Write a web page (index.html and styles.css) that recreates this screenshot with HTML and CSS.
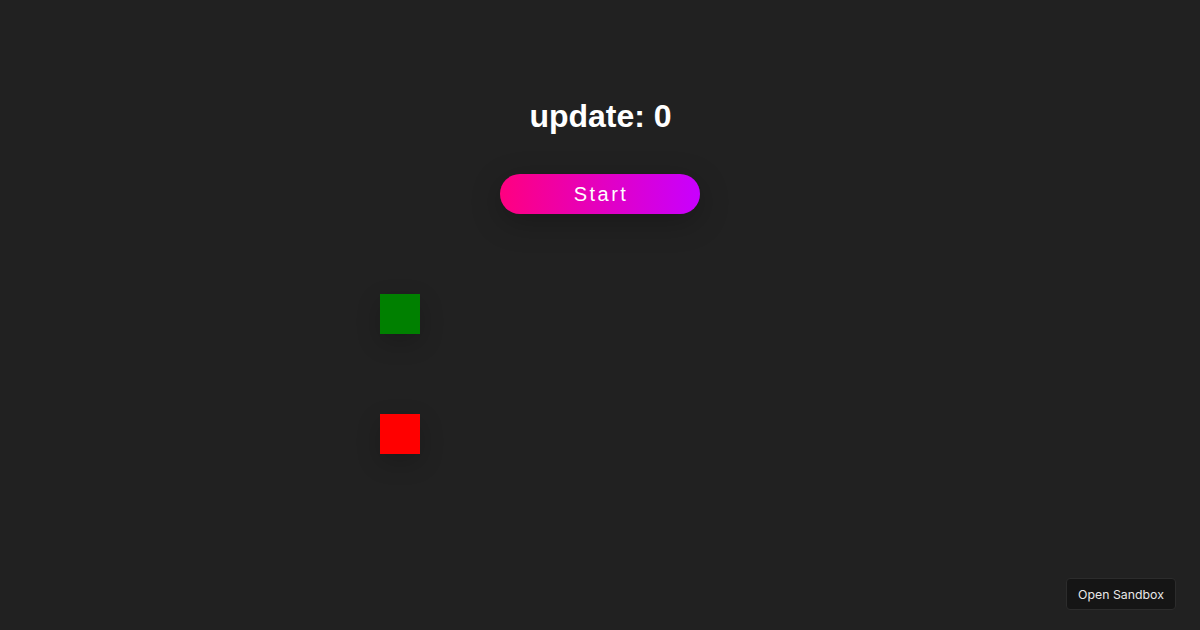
FILE: index.html
```html
<!DOCTYPE html>
<html>
<head>
<meta charset="utf-8">
<link rel="stylesheet" href="styles.css">
</head>
<body>
<div class="app">
  <h1 class="title">update: 0</h1>
  <button class="start">Start</button>
  <div class="track">
    <div class="box box-green"></div>
    <div class="box box-red"></div>
  </div>
</div>
<a class="sandbox">Open Sandbox</a>
</body>
</html>
```
FILE: styles.css
```css
html, body {
  margin: 0;
  padding: 0;
  background: #212121;
  height: 100%;
  font-family: "Liberation Sans", Arial, sans-serif;
}
.app {
  display: flex;
  flex-direction: column;
  align-items: center;
  padding-top: 98px;
}
.title {
  margin: 0;
  padding-left: 1px;
  font-size: 32px;
  line-height: 36px;
  font-weight: bold;
  color: #ffffff;
}
.start {
  margin-top: 40px;
  width: 200px;
  height: 40px;
  border: none;
  border-radius: 20px;
  background: linear-gradient(90deg, #ff0080 0%, #c800ff 100%);
  color: #ffffff;
  font-family: "Liberation Sans", Arial, sans-serif;
  font-size: 20px;
  letter-spacing: 2.5px;
  padding: 0 0 0 2px;
  box-shadow: 0 8px 30px rgba(0, 0, 0, 0.25);
}
.track {
  width: 440px;
  margin-top: 80px;
  display: flex;
  flex-direction: column;
  gap: 80px;
}
.box {
  width: 40px;
  height: 40px;
  box-shadow: 0 8px 24px rgba(0, 0, 0, 0.2);
}
.box-green { background: #008000; }
.box-red { background: #ff0000; }
.sandbox {
  position: fixed;
  right: 24px;
  bottom: 20px;
  width: 110px;
  height: 32px;
  box-sizing: border-box;
  display: flex;
  align-items: center;
  justify-content: center;
  background: #151515;
  border: 1px solid #2c2c2c;
  border-radius: 4px;
  color: #e8e8e8;
  font-size: 12.3px;
  font-family: "Inter", "Liberation Sans", sans-serif;
}
```
